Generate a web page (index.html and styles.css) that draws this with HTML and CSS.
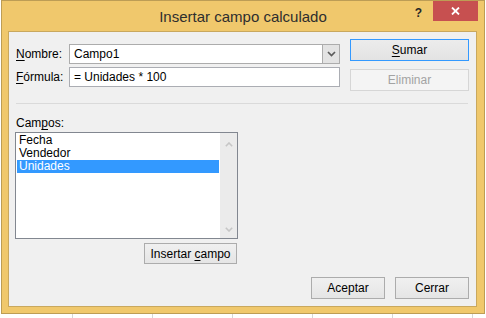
FILE: index.html
```html
<!DOCTYPE html>
<html lang="es">
<head>
    <meta charset="UTF-8">
    <title>Insertar campo calculado</title>
    <link rel="stylesheet" href="styles.css">
</head>
<body>
<div class="window">
    <div class="titlebar">
        <span></span>
        <span class="title">Insertar campo calculado</span>
        <div class="controls">
            <span class="help">?</span>
            <span class="close">
                <svg width="9" height="8" viewBox="0 0 9 8"><path d="M1 0.5 L8 7.5 M8 0.5 L1 7.5" stroke="#fff" stroke-width="1.8" fill="none"/></svg>
            </span>
        </div>
    </div>
    <div class="client">
        <div class="top">
            <div class="fields">
                <div class="row">
                    <label><u>N</u>ombre:</label>
                    <div class="combo">
                        <span class="combo__text">Campo1</span>
                        <span class="combo__btn">
                            <svg width="9" height="6" viewBox="0 0 9 6"><path d="M1 1 L4.5 4.5 L8 1" stroke="#5b5b5b" stroke-width="1.7" fill="none"/></svg>
                        </span>
                    </div>
                </div>
                <div class="row">
                    <label><u>F</u>órmula:</label>
                    <div class="textbox">= Unidades * 100</div>
                </div>
            </div>
            <div class="side">
                <button class="btn btn--default"><u>S</u>umar</button>
                <button class="btn" disabled>Eliminar</button>
            </div>
        </div>
        <div class="sep"></div>
        <div class="campos">
            <label>Cam<u>p</u>os:</label>
            <div class="listbox">
                <ul class="items">
                    <li>Fecha</li>
                    <li>Vendedor</li>
                    <li class="sel">Unidades</li>
                </ul>
                <div class="vscroll">
                    <svg width="8" height="5" viewBox="0 0 8 5"><path d="M0.8 4.2 L4 1 L7.2 4.2" stroke="#c6c6c6" stroke-width="1.6" fill="none"/></svg>
                    <svg width="8" height="5" viewBox="0 0 8 5"><path d="M0.8 0.8 L4 4 L7.2 0.8" stroke="#c6c6c6" stroke-width="1.6" fill="none"/></svg>
                </div>
            </div>
            <button class="btn btn--insert">Insertar <u>c</u>ampo</button>
        </div>
        <div class="footer">
            <button class="btn btn--wide">Aceptar</button>
            <button class="btn btn--wide">Cerrar</button>
        </div>
    </div>
</div>
</body>
</html>
```

FILE: styles.css
```css
html, body {
    margin: 0;
    padding: 0;
}

body {
    width: 486px;
    height: 318px;
    background-color: #fff;
    background-image: repeating-linear-gradient(90deg, transparent 0 72px, #d6d6d6 72px 73px, transparent 73px 80px);
    font-family: "Liberation Sans", Arial, sans-serif;
    font-size: 12px;
    color: #000;
    overflow: hidden;
}

.window {
    margin-left: 1px;
    width: 484px;
    height: 314px;
    box-sizing: border-box;
    border: 1px solid #bd9d55;
    background: #f0c86c;
    display: flex;
    flex-direction: column;
}

.titlebar {
    height: 30px;
    display: grid;
    grid-template-columns: 1fr auto 1fr;
}

.title {
    align-self: center;
    margin-top: 1px;
    font-size: 15px;
    color: #2e2e2e;
}

.controls {
    justify-self: end;
    display: flex;
    align-items: flex-start;
    margin-right: 6px;
}

.help {
    margin-top: 5px;
    margin-right: 11px;
    font-weight: bold;
    font-size: 12px;
    color: #262626;
}

.close {
    width: 45px;
    height: 20px;
    background: #c75050;
    display: flex;
    align-items: center;
    justify-content: center;
}

.client {
    flex: 1;
    margin: 0 7px 6px 6px;
    border: 1px solid #c9a85e;
    background: #f0f0f0;
    padding: 7px 7px 0 6px;
}

.top {
    display: flex;
}

.fields {
    width: 325px;
    margin-top: 5px;
    display: flex;
    flex-direction: column;
    gap: 3px;
}

.row {
    display: flex;
    align-items: center;
}

.row label {
    width: 54px;
    padding-left: 1px;
    box-sizing: border-box;
}

u {
    text-underline-offset: 2px;
}

.combo, .textbox {
    width: 271px;
    height: 20px;
    box-sizing: border-box;
    background: #fff;
    display: flex;
    align-items: center;
}

.combo {
    border: 1px solid #acacac;
}

.textbox {
    border: 1px solid #abadb3;
    padding-left: 4px;
}

.combo__text {
    flex: 1;
    padding-left: 4px;
}

.combo__btn {
    width: 16px;
    height: 18px;
    border-left: 1px solid #acacac;
    background: #e3e3e3;
    display: flex;
    align-items: center;
    justify-content: center;
}

.side {
    margin-left: 10px;
    width: 119px;
    display: flex;
    flex-direction: column;
    gap: 8px;
}

.btn {
    height: 22px;
    box-sizing: border-box;
    border: 1px solid #acacac;
    background: linear-gradient(#f0f0f0, #e5e5e5);
    font-family: inherit;
    font-size: 12px;
    color: #000;
    padding: 0;
    margin: 0;
}

.btn--default {
    border-color: #3399ff;
    background: linear-gradient(#ececec, #e3e3e3);
}

.btn:disabled {
    border-color: #d6d6d6;
    background: #f4f4f4;
    color: #a3a3a3;
}

.sep {
    margin: 12px 1px 0 1px;
    height: 1px;
    background: #dadada;
}

.campos {
    width: 223px;
    display: flex;
    flex-direction: column;
}

.campos label {
    margin-top: 11px;
    padding-left: 1px;
    line-height: 16px;
}

.listbox {
    margin-top: 1px;
    height: 107px;
    box-sizing: border-box;
    border: 1px solid #828790;
    background: #fff;
    display: flex;
}

.items {
    list-style: none;
    flex: 1;
    margin: 1px 1px 0 1px;
    padding: 0;
}

.items li {
    height: 13px;
    line-height: 13px;
    padding-left: 2px;
}

.items li.sel {
    background: #3399ff;
    color: #fff;
}

.vscroll {
    width: 17px;
    background: #ebebeb;
    display: flex;
    flex-direction: column;
    justify-content: space-between;
    align-items: center;
    padding: 9px 0 6px;
    box-sizing: border-box;
}

.btn--insert {
    align-self: flex-end;
    margin-top: 4px;
    margin-right: 1px;
    width: 93px;
    height: 21px;
}

.footer {
    margin-top: 13px;
    display: flex;
    justify-content: flex-end;
    gap: 10px;
}

.btn--wide {
    width: 74px;
}
```
